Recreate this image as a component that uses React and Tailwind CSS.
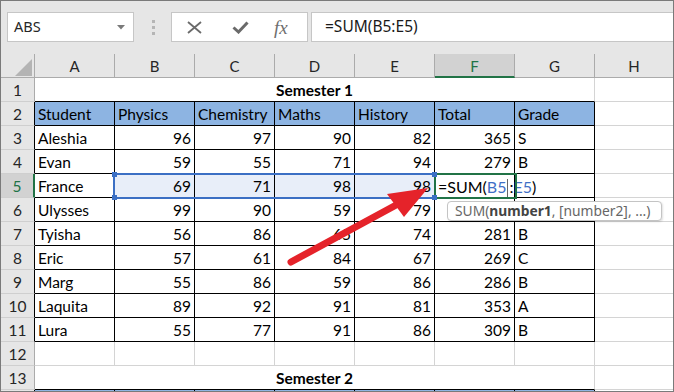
import React from "react";

const rows = [
  ["Aleshia", 96, 97, 90, 82, 365, "S"],
  ["Evan", 59, 55, 71, 94, 279, "B"],
  ["France", 69, 71, 98, 98, null, ""],
  ["Ulysses", 99, 90, 59, 79, null, ""],
  ["Tyisha", 56, 86, 65, 74, 281, "B"],
  ["Eric", 57, 61, 84, 67, 269, "C"],
  ["Marg", 55, 86, 59, 86, 286, "B"],
  ["Laquita", 89, 92, 91, 81, 353, "A"],
  ["Lura", 55, 77, 91, 86, 309, "B"],
];
const headers = ["Student", "Physics", "Chemistry", "Maths", "History", "Total", "Grade"];
const letters = ["A", "B", "C", "D", "E", "F", "G", "H"];

function Cell({ children, align = "left", bold, bg = "bg-white", rBlack, bBlack, noR, span = "", z = "" }) {
  const cls = [
    "h-[24px] border-b flex items-center pt-[2px] px-[3px] whitespace-nowrap text-[15.5px] text-black",
    noR ? "" : "border-r",
    align === "right" ? "justify-end" : align === "center" ? "justify-center" : "justify-start",
    bold ? "font-bold" : "",
    bg,
    rBlack ? "border-r-black" : "border-r-[#d4d4d4]",
    bBlack ? "border-b-black" : "border-b-[#d4d4d4]",
    span,
    z || "overflow-hidden",
  ].join(" ");
  return <div className={cls}>{children}</div>;
}

function RowHead({ n, edge, active }) {
  const cls = active
    ? "h-[24px] border-b border-b-[#cfcfcf] flex items-center justify-center pt-[2px] text-[15.5px] bg-[#d2d2d2] text-[#217346] border-r-2 border-r-[#217346]"
    : "h-[24px] border-b border-b-[#cfcfcf] flex items-center justify-center pt-[2px] text-[15.5px] bg-[#e6e6e6] text-[#262626] border-r " +
      (edge ? "border-r-black" : "border-r-[#ababab]");
  return <div className={cls}>{n}</div>;
}

function ColHead({ l }) {
  if (l === "F")
    return (
      <div className="h-[24px] border-r border-r-[#ababab] border-b-2 border-b-[#217346] bg-[#d2d2d2] flex items-center justify-center pt-[2px] text-[15px] text-[#217346]">
        {l}
      </div>
    );
  return (
    <div
      className={
        "h-[24px] border-b border-[#ababab] flex items-center justify-center pt-[2px] text-[15px] text-[#262626] " +
        (l === "H" ? "" : "border-r")
      }
    >
      {l}
    </div>
  );
}

export default function App() {
  return (
    <div className="w-[674px] h-[392px] border border-[#7a7a7a] bg-[#e6e6e6] relative overflow-hidden font-['Lato',sans-serif]">
      {/* Formula bar */}
      <div className="h-[41px] pt-[11px] flex items-start font-['Noto_Sans',sans-serif]">
        <div className="ml-[6px] w-[127px] h-[30px] border border-[#c6c6c6] bg-white flex items-center justify-between pl-[6px] pr-[8px]">
          <span className="text-[14.5px] text-[#262626]">ABS</span>
          <svg width="8" height="5" viewBox="0 0 8 5">
            <polygon points="0,0 8,0 4,4.5" fill="#7a7a7a" />
          </svg>
        </div>
        <div className="w-[37px] h-[30px] flex flex-col items-center justify-center gap-[3px] pl-[1px]">
          <div className="w-[3px] h-[3px] bg-[#b5b5b5]" />
          <div className="w-[3px] h-[3px] bg-[#b5b5b5]" />
          <div className="w-[3px] h-[3px] bg-[#b5b5b5]" />
        </div>
        <div className="w-[137px] h-[30px] border border-[#c6c6c6] bg-white flex items-center pl-[15px]">
          <svg width="15" height="13" viewBox="0 0 15 13">
            <path d="M1 1 L14 12 M14 1 L1 12" stroke="#6a6a6a" strokeWidth="1.8" fill="none" />
          </svg>
          <svg className="ml-[30px]" width="17" height="13" viewBox="0 0 17 13">
            <path d="M1.5 6.5 L6.5 11 L15.5 1.5" stroke="#6a6a6a" strokeWidth="3" fill="none" />
          </svg>
          <span className="ml-[25px] font-['Liberation_Serif',serif] italic text-[19px] text-[#6e6e6e] leading-none">fx</span>
        </div>
        <div className="ml-[3px] flex-1 h-[30px] border-y border-l border-[#c6c6c6] bg-white flex items-center pl-[13px]">
          <span className="text-[15.5px] text-[#1a1a1a]">=SUM(B5:E5)</span>
        </div>
      </div>
      <div className="h-[12px]" />

      {/* Sheet grid */}
      <div className="grid grid-cols-[34px_repeat(7,80px)_1fr]">
        {/* column header */}
        <div className="h-[24px] border-r border-b border-[#ababab] flex items-end justify-end pr-[2px] pb-[1px]">
          <svg width="17" height="17" viewBox="0 0 17 17">
            <polygon points="17,0 17,17 0,17" fill="#b4b4b4" />
          </svg>
        </div>
        {letters.map((l) => (
          <ColHead key={l} l={l} />
        ))}

        {/* Row 1 */}
        <RowHead n={1} />
        <Cell align="center" bold bBlack span="col-span-7">Semester 1</Cell>
        <Cell noR />

        {/* Row 2 */}
        <RowHead n={2} edge />
        {headers.map((h) => (
          <Cell key={h} bg="bg-[#8db4e2]" rBlack bBlack>
            {h}
          </Cell>
        ))}
        <Cell noR />

        {/* Rows 3-11 */}
        {rows.map((r, i) => {
          const rn = i + 3;
          const isActive = rn === 5;
          return (
            <React.Fragment key={rn}>
              <RowHead n={rn} edge active={isActive} />
              <Cell rBlack bBlack>{r[0]}</Cell>
              {[1, 2, 3, 4].map((k) => (
                <Cell key={k} align="right" rBlack bBlack bg={isActive ? "bg-[#e8eef9]" : "bg-white"}>
                  {r[k]}
                </Cell>
              ))}
              {isActive ? (
                <Cell rBlack bBlack z="relative z-10">
                  <span className="text-[16px]">
                    =SUM(<span className="text-[#3f6fc6]">B5</span>
                    <span className="inline-block w-px h-[18px] bg-[#666] mx-[1px] align-[-4px]" />
                    :<span className="text-[#3f6fc6]">E5</span>)
                  </span>
                </Cell>
              ) : (
                <Cell align="right" rBlack bBlack>
                  {r[5]}
                </Cell>
              )}
              <Cell rBlack bBlack>{r[6]}</Cell>
              <Cell noR />
            </React.Fragment>
          );
        })}

        {/* Row 12 */}
        <RowHead n={12} />
        {[0, 1, 2, 3, 4, 5, 6].map((k) => (
          <Cell key={k} />
        ))}
        <Cell noR />

        {/* Row 13 */}
        <RowHead n={13} />
        <Cell align="center" bold bBlack span="col-span-7">Semester 2</Cell>
        <Cell noR />

        {/* Row 14 (only its top edge is visible) */}
        <RowHead n="" edge />
        {[0, 1, 2, 3, 4, 5, 6].map((k) => (
          <Cell key={k} bg="bg-[#8db4e2]" rBlack bBlack />
        ))}
        <Cell noR />
      </div>

      {/* Selection range B5:E5 */}
      <div className="absolute left-[112px] top-[172px] w-[323px] h-[26px] border-2 border-[#3b6fc4] z-20 pointer-events-none" />
      {/* Active cell F5 */}
      <div className="absolute left-[433px] top-[172px] w-[83px] h-[26px] border-2 border-[#217346] z-20 pointer-events-none" />
      {/* Range handles */}
      <div className="absolute left-[111px] top-[171px] w-[5px] h-[5px] bg-[#3b6fc4] z-20" />
      <div className="absolute left-[111px] top-[194px] w-[5px] h-[5px] bg-[#3b6fc4] z-20" />
      <div className="absolute left-[431px] top-[171px] w-[5px] h-[5px] bg-[#3b6fc4] z-20" />
      <div className="absolute left-[431px] top-[194px] w-[5px] h-[5px] bg-[#3b6fc4] z-20" />

      {/* Tooltip */}
      <div className="absolute left-[446px] top-[200px] w-[215px] h-[20px] rounded-[4px] border border-[#c4c4c4] bg-white shadow-[1px_1px_2px_rgba(0,0,0,0.12)] flex items-center pl-[7px] z-30 font-['Noto_Sans',sans-serif] text-[13.8px] text-[#666] whitespace-nowrap">
        SUM(<span className="font-bold text-[#444]">number1</span>, [number2], ...)
      </div>

      {/* Red arrow */}
      <svg className="absolute left-[-1px] top-[-1px] z-40 pointer-events-none" width="674" height="392" viewBox="0 0 674 392">
        <line x1="291" y1="262" x2="398" y2="204" stroke="#e5232a" strokeWidth="7" strokeLinecap="round" />
        <polygon points="428,188 387,194 404,217" fill="#e5232a" />
      </svg>
    </div>
  );
}
